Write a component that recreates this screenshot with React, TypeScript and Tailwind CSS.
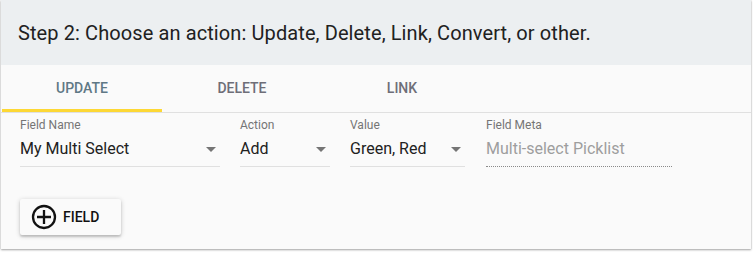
import { useState } from "react";

const tabs = ["UPDATE", "DELETE", "LINK"];

function Caret() {
  return (
    <svg width="10" height="5" viewBox="0 0 10 5" className="fill-[#757575]">
      <path d="M0 0h10L5 5z" />
    </svg>
  );
}

function SelectField({ label, value, width }: { label: string; value: string; width: string }) {
  return (
    <div className={`flex flex-col ${width}`}>
      <span className="text-[12px] leading-[14px] text-[#757575]">{label}</span>
      <div className="flex items-center justify-between border-b border-[#e0e0e0] h-[35px] pr-1">
        <span className="text-[16px] text-[#212121]">{value}</span>
        <Caret />
      </div>
    </div>
  );
}

export default function App() {
  const [tab, setTab] = useState(0);

  return (
    <div className="w-[753px] h-[253px] bg-white font-['Roboto',sans-serif]">
      <div className="w-[750px] h-[249px] ml-[1px] bg-[#fafafa] shadow-[0_1px_2px_rgba(0,0,0,0.35),0_0_1px_rgba(0,0,0,0.2)] flex flex-col">
        {/* header */}
        <div className="h-[65px] bg-[#eceff1] flex items-center pl-[17px] pt-[1px]">
          <h2 className="text-[20px] tracking-[0.1px] text-[#212121]">
            Step 2: Choose an action: Update, Delete, Link, Convert, or other.
          </h2>
        </div>

        {/* tabs */}
        <div className="h-[48px] flex border-b border-[#e0e0e0] pl-[1px]">
          {tabs.map((t, i) => (
            <button
              key={t}
              onClick={() => setTab(i)}
              className={`w-[160px] h-full flex items-center justify-center text-[14px] font-medium pt-[2px] border-b-[3px] ${
                tab === i ? "border-[#fdd835] text-[#5f7885]" : "border-transparent text-[#6e6e78]"
              }`}
            >
              {t}
            </button>
          ))}
        </div>

        {/* fields */}
        <div className="flex gap-5 pl-[19px] pt-[5px]">
          <SelectField label="Field Name" value="My Multi Select" width="w-[200px]" />
          <SelectField label="Action" value="Add" width="w-[90px]" />
          <SelectField label="Value" value="Green, Red" width="w-[115px]" />
          <div className="flex flex-col w-[186px] ml-[1px]">
            <span className="text-[12px] leading-[14px] text-[#757575]">Field Meta</span>
            <div className="flex items-center h-[35px] border-b border-dotted border-[#8a8a8a]">
              <span className="text-[16px] text-[#9e9e9e]">Multi-select Picklist</span>
            </div>
          </div>
        </div>

        {/* add field */}
        <div className="pl-[19px] pt-[32px]">
          <button className="w-[101px] h-[36px] bg-[#fafafa] rounded-[2px] shadow-[0_1px_5px_rgba(0,0,0,0.2),0_2px_2px_rgba(0,0,0,0.14)] flex items-center gap-[6px] pl-[11px]">
            <svg width="26" height="26" viewBox="0 0 26 26" fill="none" stroke="#111" strokeWidth="2.3">
              <circle cx="13" cy="13" r="11" />
              <path d="M13 6v14M6 13h14" />
            </svg>
            <span className="text-[14px] font-medium text-[#111]">FIELD</span>
          </button>
        </div>
      </div>
    </div>
  );
}
